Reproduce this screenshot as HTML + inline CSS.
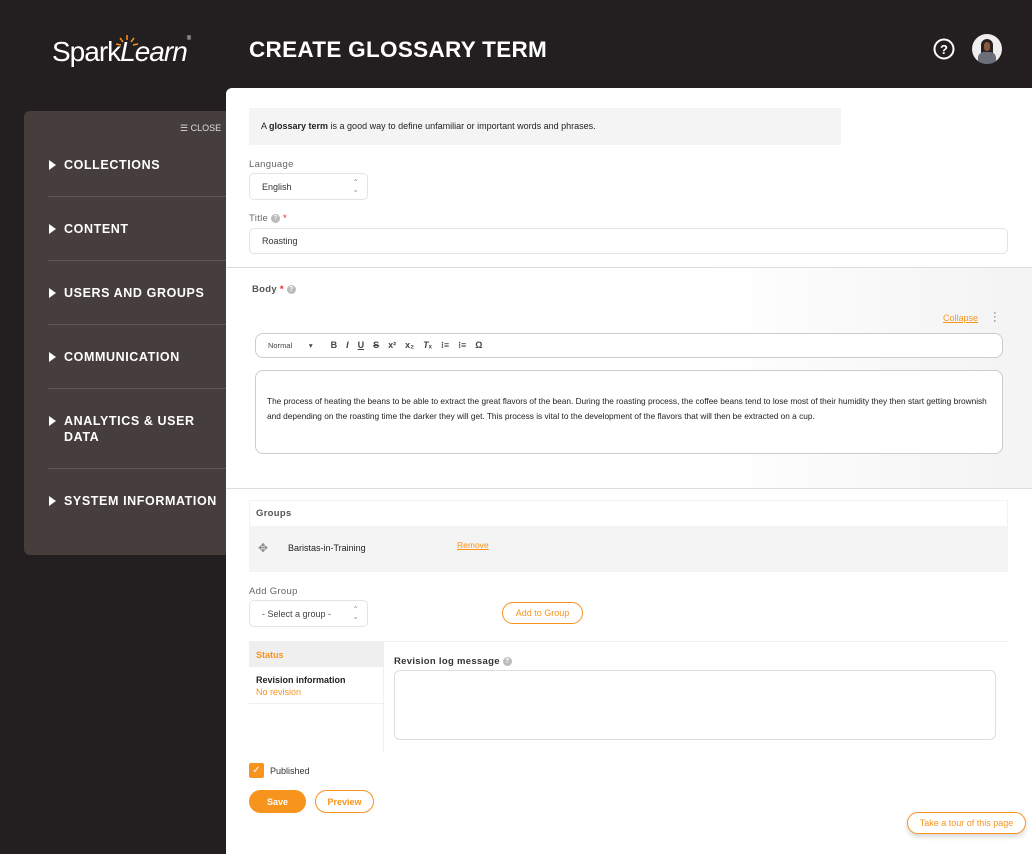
<!DOCTYPE html>
<html><head><meta charset="utf-8">
<style>
*{box-sizing:border-box;margin:0;padding:0}
body{width:1032px;height:854px;background:#231f20;font-family:"Liberation Sans",sans-serif;position:relative;overflow:hidden;color:#222}
.a{position:absolute}
.side{left:24px;top:111px;width:210px;height:444px;background:#463e3d;border-radius:6px}
.nav{position:absolute;left:64px;color:#fff;font-weight:bold;font-size:12.5px;letter-spacing:.6px;line-height:16px;white-space:nowrap}
.nav:before{content:"";position:absolute;left:-15px;top:3px;border-left:7px solid #fff;border-top:5px solid transparent;border-bottom:5px solid transparent}
.sep{position:absolute;left:48px;width:178px;height:1px;background:#5e5655}
.main{left:226px;top:88px;width:806px;height:766px;background:#fff;border-top-left-radius:6px}
.lbl{position:absolute;font-size:9.5px;color:#666;letter-spacing:.3px}
.inp{position:absolute;border:1px solid #e3e3e3;border-radius:5px;background:#fff;font-size:9px;color:#333;padding-left:12px;display:flex;align-items:center}
.q{display:inline-block;width:9px;height:9px;border-radius:50%;background:#bbb;color:#fff;font-size:7px;text-align:center;line-height:9px;vertical-align:middle}
.btn{position:absolute;border:1.5px solid #f7941d;border-radius:12px;color:#f7941d;font-size:9px;display:flex;align-items:center;justify-content:center;background:#fff}
.or{color:#f7941d}
.tb span{margin-right:9px;font-weight:bold;font-size:9px;color:#444}
</style></head><body>
<div class="a" style="left:52px;top:36px;color:#fff;font-size:28px;letter-spacing:-1px;white-space:nowrap"><span style="font-weight:300">Spark</span><i>Learn</i><span style="font-size:6px;vertical-align:top">®</span></div>
<svg class="a" style="left:116px;top:35px" width="22" height="12"><g stroke="#f7941d" stroke-width="1.5"><line x1="11" y1="0" x2="11" y2="5"/><line x1="4" y1="3" x2="7" y2="7"/><line x1="18" y1="3" x2="15" y2="7"/><line x1="0" y1="9" x2="5" y2="10"/><line x1="22" y1="9" x2="17" y2="10"/></g></svg>
<div class="a" style="left:249px;top:37px;color:#fff;font-size:22.5px;font-weight:bold;letter-spacing:.3px;white-space:nowrap">CREATE GLOSSARY TERM</div>
<svg class="a" style="left:933px;top:38px" width="22" height="22"><circle cx="11" cy="11" r="9.5" fill="none" stroke="#fff" stroke-width="2"/><text x="11" y="16" text-anchor="middle" fill="#fff" font-size="13" font-weight="bold" font-family="Liberation Sans">?</text></svg>
<div class="a" style="left:972px;top:34px;width:30px;height:30px;border-radius:50%;background:#eee;overflow:hidden"><div style="position:absolute;left:9px;top:5px;width:12px;height:25px;background:#2a2220;border-radius:6px 6px 2px 2px"></div><div style="position:absolute;left:6px;top:18px;width:18px;height:14px;background:#6a6f7a;border-radius:6px 6px 0 0"></div><div style="position:absolute;left:12px;top:8px;width:6px;height:9px;background:#8a5a40;border-radius:3px"></div></div>

<div class="a side"></div>
<div class="a" style="left:180px;top:123px;color:#ddd;font-size:9px">☰ CLOSE</div>
<div class="nav" style="top:157px">COLLECTIONS</div>
<div class="sep" style="top:196px"></div>
<div class="nav" style="top:221px">CONTENT</div>
<div class="sep" style="top:260px"></div>
<div class="nav" style="top:285px">USERS AND GROUPS</div>
<div class="sep" style="top:324px"></div>
<div class="nav" style="top:349px">COMMUNICATION</div>
<div class="sep" style="top:388px"></div>
<div class="nav" style="top:413px">ANALYTICS &amp; USER<br>DATA</div>
<div class="sep" style="top:468px"></div>
<div class="nav" style="top:493px">SYSTEM INFORMATION</div>

<div class="a main"></div>
<div class="a" style="left:249px;top:108px;width:592px;height:37px;background:#f4f4f4;font-size:9px;padding:13px 12px;color:#222">A <b>glossary term</b> is a good way to define unfamiliar or important words and phrases.</div>
<div class="lbl" style="left:249px;top:159px">Language</div>
<div class="inp" style="left:249px;top:173px;width:119px;height:27px">English<span style="position:absolute;right:8px;top:5px;font-size:8px;color:#999;line-height:7px">⌃<br>⌄</span></div>
<div class="lbl" style="left:249px;top:213px">Title <span class="q">?</span> <span style="color:#e22">*</span></div>
<div class="inp" style="left:249px;top:228px;width:759px;height:26px">Roasting</div>

<div class="a" style="left:226px;top:267px;width:806px;height:222px;background:linear-gradient(90deg,#fff 0%,#fff 60%,#f3f3f3 100%);border-top:1.5px solid #ddd;border-bottom:1.5px solid #ddd"></div>
<div class="lbl" style="left:252px;top:284px;color:#555;font-weight:bold">Body <span style="color:#e22">*</span> <span class="q">?</span></div>
<div class="a or" style="left:943px;top:313px;font-size:9px;text-decoration:underline">Collapse</div>
<div class="a" style="left:993px;top:311px;font-size:11px;color:#555;line-height:4px">·<br>·<br>·</div>
<div class="a tb" style="left:255px;top:333px;width:748px;height:25px;border:1px solid #ccc;border-radius:8px;background:#fff;padding:6px 12px;font-size:8px;white-space:nowrap"><span style="font-weight:normal;font-size:7.5px;margin-right:18px">Normal &nbsp;&nbsp;&nbsp;&nbsp;&nbsp;&nbsp;&nbsp;▾</span><span>B</span><span><i>I</i></span><span><u>U</u></span><span><s>S</s></span><span>x²</span><span>x₂</span><span><i>T</i>ₓ</span><span>⁝≡</span><span>⁝≡</span><span>Ω</span></div>
<div class="a" style="left:255px;top:370px;width:748px;height:84px;border:1px solid #ccc;border-radius:8px;background:#fff;padding:23px 11px;font-size:8.3px;line-height:14.5px;color:#222">The process of heating the beans to be able to extract the great flavors of the bean. During the roasting process, the coffee beans tend to lose most of their humidity they then start getting brownish and depending on the roasting time the darker they will get. This process is vital to the development of the flavors that will then be extracted on a cup.</div>

<div class="a" style="left:249px;top:500px;width:759px;height:72px;border:1px solid #f2f2f2"></div>
<div class="lbl" style="left:256px;top:508px;color:#555;font-weight:bold">Groups</div>
<div class="a" style="left:249px;top:526px;width:759px;height:46px;background:#f4f4f4"></div>
<div class="a" style="left:258px;top:541px;font-size:12px;color:#888">✥</div>
<div class="a" style="left:288px;top:543px;font-size:9px;color:#222">Baristas-in-Training</div>
<div class="a or" style="left:457px;top:540px;font-size:8.5px;text-decoration:underline">Remove</div>

<div class="lbl" style="left:249px;top:586px">Add Group</div>
<div class="inp" style="left:249px;top:600px;width:119px;height:27px;color:#444">- Select a group -<span style="position:absolute;right:8px;top:5px;font-size:8px;color:#999;line-height:7px">⌃<br>⌄</span></div>
<div class="btn" style="left:502px;top:602px;width:81px;height:22px">Add to Group</div>

<div class="a" style="left:249px;top:641px;width:759px;height:111px;border-top:1px solid #f0f0f0"></div>
<div class="a or" style="left:249px;top:642px;width:134px;height:25px;background:#efefef;font-size:9px;padding:8px 7px;font-weight:bold;color:#f7941d">Status</div>
<div class="a" style="left:249px;top:667px;width:134px;height:37px;border-bottom:1px solid #f0f0f0;padding:7px 7px;font-size:9px;line-height:12px"><b style="color:#222">Revision information</b><br><span class="or">No revision</span></div>
<div class="a" style="left:383px;top:642px;width:1px;height:110px;background:#f0f0f0"></div>
<div class="lbl" style="left:394px;top:656px;color:#333;font-weight:bold">Revision log message <span class="q">?</span></div>
<div class="a" style="left:394px;top:670px;width:602px;height:70px;border:1px solid #ddd;border-radius:6px"></div>

<div class="a" style="left:249px;top:763px;width:15px;height:15px;background:#f7941d;border-radius:2px;color:#fff;font-size:10px;text-align:center;line-height:15px">✓</div>
<div class="a" style="left:270px;top:766px;font-size:9px;color:#333">Published</div>
<div class="btn" style="left:249px;top:790px;width:57px;height:23px;background:#f7941d;color:#fff;font-weight:bold">Save</div>
<div class="btn" style="left:315px;top:790px;width:59px;height:23px;font-weight:bold">Preview</div>
<div class="btn" style="left:907px;top:812px;width:119px;height:22px;box-shadow:0 3px 5px rgba(0,0,0,.15)">Take a tour of this page</div>
</body></html>
